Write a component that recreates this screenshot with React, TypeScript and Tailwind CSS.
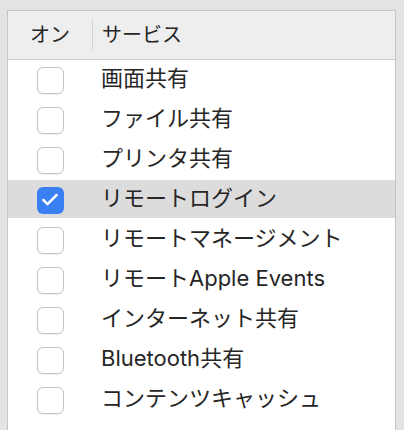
import { Check } from 'lucide-react';

const services = [
  { name: '画面共有', on: false },
  { name: 'ファイル共有', on: false },
  { name: 'プリンタ共有', on: false },
  { name: 'リモートログイン', on: true },
  { name: 'リモートマネージメント', on: false },
  { name: 'リモートApple Events', on: false },
  { name: 'インターネット共有', on: false },
  { name: 'Bluetooth共有', on: false },
  { name: 'コンテンツキャッシュ', on: false },
];

export default function App() {
  return (
    <div className="h-[430px] w-[404px] overflow-hidden bg-[#e3e3e3] pl-[7px] pt-[10px] font-['Inter','Noto_Sans_CJK_JP',sans-serif] text-[#262626]">
      <div className="w-[389px] h-[440px] border border-b-0 border-[#c6c6c6] bg-white">
        {/* header */}
        <div className="flex h-[49px] items-center border-b border-[#c8c8c8] bg-[#eeeeee] text-[20px]">
          <div className="flex w-[84px] justify-center">オン</div>
          <div className="h-[32px] w-px bg-[#d2d2d2]" />
          <div className="pl-[9px]">サービス</div>
        </div>

        {services.map((s) => (
          <ServiceRow key={s.name} name={s.name} on={s.on} />
        ))}
      </div>
    </div>
  );
}

function ServiceRow({ name, on }: { name: string; on: boolean }) {
  return (
    <div className="h-10">
      <div className={`flex h-[38px] items-center text-[22px] ${on ? 'bg-[#dcdcdc]' : ''}`}>
        <div className="flex w-[84px] justify-center pt-[2px]">
          {on ? (
            <div className="flex h-[27px] w-[27px] items-center justify-center rounded-[6px] bg-[#3b7ff5]">
              <Check size={20} strokeWidth={3} className="text-white" />
            </div>
          ) : (
            <div className="h-[27px] w-[27px] rounded-[6px] border border-[#c4c4c4] bg-white shadow-[0_1px_1px_rgba(0,0,0,0.06)]" />
          )}
        </div>
        <div className="pl-[9px] pb-[3px] leading-none">{name}</div>
      </div>
    </div>
  );
}
